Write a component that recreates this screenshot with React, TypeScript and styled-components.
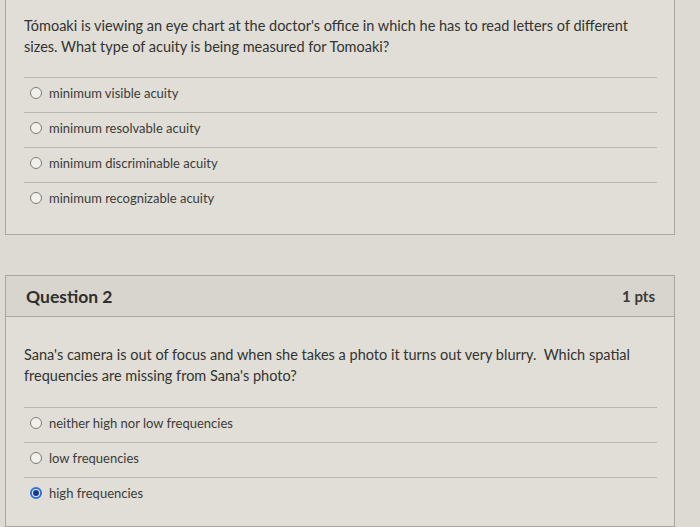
import React from 'react'
import styled, { createGlobalStyle } from 'styled-components'

const GlobalStyle = createGlobalStyle`
  html, body {
    margin: 0;
    padding: 0;
    background: #dcdad2;
    font-family: Lato, "Open Sans", sans-serif;
    overflow: hidden;
  }
`

const Page = styled.div`
  display: flex;
  flex-direction: column;
  gap: 40px;
  padding-left: 5px;
  width: 670px;
`

const Card = styled.div<{ $cut?: boolean }>`
  display: flex;
  flex-direction: column;
  background: #e0ded6;
  border: 1px solid #a8a7a0;
  ${(p) => (p.$cut ? 'border-top: none;' : '')}
`

const CardHeader = styled.div`
  display: flex;
  align-items: center;
  justify-content: space-between;
  height: 40px;
  padding: 0 19px 0 20px;
  background: #d7d5cd;
  border-bottom: 1px solid #a8a7a0;
`

const Title = styled.span`
  font-size: 17.5px;
  font-weight: 700;
  color: #2f2f2f;
`

const Points = styled.span`
  font-size: 15px;
  font-weight: 700;
  color: #3a3a3a;
`

const Body = styled.div<{ $top: number; $bottom: number }>`
  display: flex;
  flex-direction: column;
  padding: ${(p) => p.$top}px 17px ${(p) => p.$bottom}px 18px;
`

const QuestionText = styled.p<{ $gap: number }>`
  margin: 0 0 ${(p) => p.$gap}px;
  max-width: 616px;
  font-size: 14.5px;
  line-height: 20.5px;
  color: #333331;
`

const AnswerList = styled.div`
  display: flex;
  flex-direction: column;
  border-top: 1px solid #b9b8b1;
`

const Answer = styled.label`
  display: flex;
  align-items: center;
  gap: 7px;
  height: 30px;
  padding: 0 0 4px 6px;
  font-size: 13px;
  color: #3c3c3a;
  & + & {
    border-top: 1px solid #b9b8b1;
  }
`

const Radio = styled.span<{ $checked?: boolean }>`
  box-sizing: border-box;
  display: inline-flex;
  align-items: center;
  justify-content: center;
  width: 12px;
  height: 12px;
  border-radius: 50%;
  border: ${(p) => (p.$checked ? '2px solid #2f6fdc' : '1px solid #7d7c78')};
  background: ${(p) => (p.$checked ? '#e8eefc' : '#f1f0ea')};
  &::after {
    content: '';
    display: ${(p) => (p.$checked ? 'block' : 'none')};
    width: 6px;
    height: 6px;
    border-radius: 50%;
    background: #173a8c;
  }
`

const q1Answers = [
  'minimum visible acuity',
  'minimum resolvable acuity',
  'minimum discriminable acuity',
  'minimum recognizable acuity',
]

const q2Answers = ['neither high nor low frequencies', 'low frequencies', 'high frequencies']

export default function App() {
  return (
    <>
      <GlobalStyle />
      <Page>
        <Card $cut>
          <Body $top={16} $bottom={17}>
            <QuestionText $gap={20}>
              Tómoaki is viewing an eye chart at the doctor's office in which he has to read letters of different
              sizes. What type of acuity is being measured for Tomoaki?
            </QuestionText>
            <AnswerList>
              {q1Answers.map((a) => (
                <Answer key={a}>
                  <Radio />
                  {a}
                </Answer>
              ))}
            </AnswerList>
          </Body>
        </Card>

        <Card>
          <CardHeader>
            <Title>Question 2</Title>
            <Points>1 pts</Points>
          </CardHeader>
          <Body $top={28} $bottom={14}>
            <QuestionText $gap={21}>
              Sana's camera is out of focus and when she takes a photo it turns out very blurry.&nbsp; Which spatial
              frequencies are missing from Sana's photo?
            </QuestionText>
            <AnswerList>
              {q2Answers.map((a, i) => (
                <Answer key={a}>
                  <Radio $checked={i === 2} />
                  {a}
                </Answer>
              ))}
            </AnswerList>
          </Body>
        </Card>
      </Page>
    </>
  )
}
